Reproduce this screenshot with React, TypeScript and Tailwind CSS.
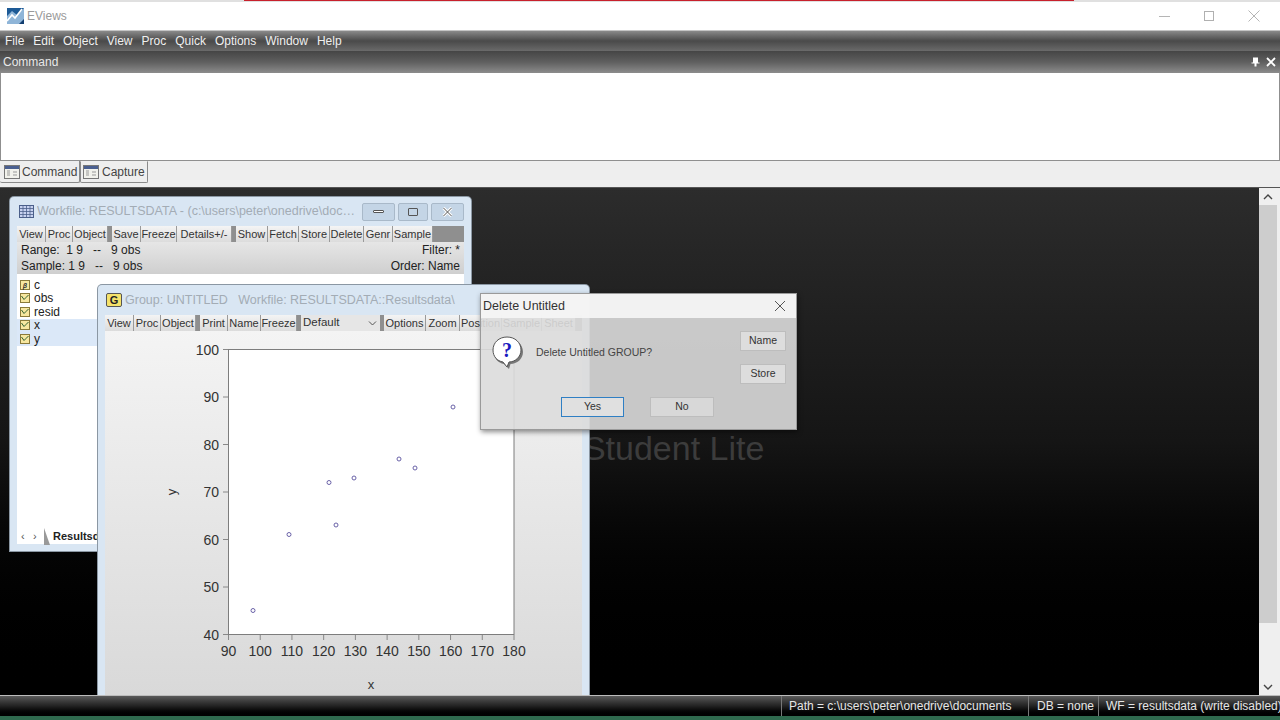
const SANS = "font-['Liberation_Sans',Arial,sans-serif]";

function BarButton({ label, w }: { label: string; w: number }) {
  return (
    <div
      className="flex h-full shrink-0 items-center justify-center border-r border-[#9a9a9a] bg-gradient-to-b from-[#f4f4f4] to-[#dcdcdc] text-[11px] text-[#333]"
      style={{ width: w }}
    >
      {label}
    </div>
  );
}

function BarGap() {
  return <div className="h-full w-[4px] shrink-0 bg-[#8f8f8f]" />;
}

function SeriesIcon({ beta }: { beta?: boolean }) {
  return (
    <svg width="10" height="10" viewBox="0 0 10 10" className="shrink-0">
      <rect x="0.5" y="0.5" width="9" height="9" fill="#f7e7a0" stroke="#8a7a3a" />
      {beta ? (
        <text x="5" y="8" fontSize="7" fontWeight="bold" fontStyle="italic" textAnchor="middle" fill="#333">
          β
        </text>
      ) : (
        <path d="M1.5 3 L4 6.5 L6 4.5 L8.5 2" fill="none" stroke="#2e5f2e" strokeWidth="1" />
      )}
    </svg>
  );
}

function TabIcon() {
  return (
    <svg width="16" height="14" viewBox="0 0 16 14" className="shrink-0">
      <rect x="0.5" y="0.5" width="15" height="13" fill="#f2f2ec" stroke="#777" />
      <rect x="1" y="1" width="14" height="3" fill="#4a5f90" />
      <path d="M3 6h3M3 8h3M3 10h3M9 7h4M9 10h4" stroke="#999" fill="none" />
    </svg>
  );
}

function Logo() {
  return (
    <svg width="17" height="16" viewBox="0 0 17 16" className="shrink-0">
      <rect width="17" height="16" fill="#1d5a96" />
      <path d="M0 16 L0 8 L5 3 L10 7 L17 0 L17 16 Z" fill="#8fb5d8" />
      <path d="M0 13 L5 7 L8 10 L15 1" fill="none" stroke="#fff" strokeWidth="1.6" />
      <path d="M12 16 L17 11 L17 16 Z" fill="#123e70" />
    </svg>
  );
}

function QuestionBubble() {
  return (
    <svg width="34" height="34" viewBox="0 0 34 34">
      <path d="M17.5 3 C26 3 32 8.5 32 16 C32 23 26 28 19.5 28 L18 33 L13 28 C7 27 3 22.5 3 16 C3 8.5 9 3 17.5 3 Z" fill="#777" />
      <path d="M16 1 C24 1 30 6.5 30 14 C30 21 24 26 18 26 L16 31 L12 26 C6 25 2 20.5 2 14 C2 6.5 8 1 16 1 Z" fill="#fff" stroke="#555" />
      <text x="16" y="21" fontSize="20" fontWeight="bold" textAnchor="middle" fill="#1a1ac0" fontFamily="Liberation Serif, serif">
        ?
      </text>
    </svg>
  );
}

function ScatterChart() {
  const xs = [90, 100, 110, 120, 130, 140, 150, 160, 170, 180];
  const ys = [100, 90, 80, 70, 60, 50, 40];
  const points = [
    [253, 610.5],
    [289, 534.5],
    [329, 482.5],
    [336, 525],
    [354, 478],
    [399, 459],
    [415, 468],
    [453, 407],
  ];
  const toX = (v: number) => 228.5 + ((v - 90) / 90) * 285.5;
  const toY = (v: number) => 349.5 + ((100 - v) / 60) * 285;
  return (
    <svg width="476" height="365" viewBox="105 331 476 365" className="block" fontFamily="Liberation Sans, Arial, sans-serif">
      <rect x="228.5" y="349.5" width="285.5" height="285" fill="#fff" stroke="#7d7d7d" />
      {xs.map(v => (
        <g key={v}>
          <line x1={toX(v)} x2={toX(v)} y1="635" y2="640" stroke="#888" />
          <text x={toX(v)} y="656" fontSize="14" textAnchor="middle" fill="#333">
            {v}
          </text>
        </g>
      ))}
      {ys.map(v => (
        <g key={v}>
          <line x1="223" x2="228" y1={toY(v)} y2={toY(v)} stroke="#888" />
          <text x="219" y={toY(v) + 5} fontSize="14" textAnchor="end" fill="#333">
            {v}
          </text>
        </g>
      ))}
      {points.map(([x, y]) => (
        <circle key={x} cx={x} cy={y} r="2" fill="none" stroke="#6a62a8" />
      ))}
      <text x="371" y="689" fontSize="13" textAnchor="middle" fill="#333">
        x
      </text>
      <text x="176" y="492" fontSize="13" textAnchor="middle" fill="#333" transform="rotate(-90 176 492)">
        y
      </text>
    </svg>
  );
}

function WorkfileWindow() {
  const rows = [
    { name: 'c', beta: true },
    { name: 'obs' },
    { name: 'resid' },
    { name: 'x', selected: true },
    { name: 'y', selected: true },
  ];
  return (
    <div className="absolute left-[10px] top-[9px] flex h-[354px] w-[461px] flex-col rounded-t-[4px] bg-[#d9e6f3] px-[7px] shadow-[0_0_0_1px_#8b97a3]">
      <div className="flex h-[29px] shrink-0 items-center gap-[3px] pl-[2px]">
        <svg width="15" height="13" viewBox="0 0 15 13" className="shrink-0">
          <rect x="0.5" y="0.5" width="14" height="12" fill="#c8d2f0" stroke="#4b5f8a" />
          <path d="M0 3.5h15M0 6.5h15M0 9.5h15M4 0v13M7.5 0v13M11 0v13" stroke="#4b5f8a" strokeWidth="0.8" />
        </svg>
        <span className="w-[326px] truncate text-[12.5px] text-[#a3acb5]">
          Workfile: RESULTSDATA - (c:\users\peter\onedrive\docume...
        </span>
        <div className="ml-[1px] flex gap-[3px]">
          <div className="flex h-[18px] w-[33px] items-center justify-center rounded-[2px] border border-[#a9b9c9] bg-[#c4d5e6]">
            <div className="h-[3px] w-[11px] rounded-[1px] border border-[#555] bg-white" />
          </div>
          <div className="flex h-[18px] w-[30px] items-center justify-center rounded-[2px] border border-[#a9b9c9] bg-[#c4d5e6]">
            <div className="h-[8px] w-[10px] rounded-[1px] border border-[#555]" />
          </div>
          <div className="flex h-[18px] w-[33px] items-center justify-center rounded-[2px] border border-[#a9b9c9] bg-[#c4d5e6]">
            <svg width="11" height="10" viewBox="0 0 11 10">
              <path d="M1.5 1 L9.5 9 M9.5 1 L1.5 9" stroke="#fff" strokeWidth="3" />
              <path d="M1.5 1 L9.5 9 M9.5 1 L1.5 9" stroke="#555" strokeWidth="1" />
            </svg>
          </div>
        </div>
      </div>
      <div className="flex h-[16px] shrink-0 bg-[#8f8f8f]">
        <BarButton label="View" w={29} />
        <BarButton label="Proc" w={27} />
        <BarButton label="Object" w={35} />
        <BarGap />
        <BarButton label="Save" w={29} />
        <BarButton label="Freeze" w={36} />
        <BarButton label="Details+/-" w={55} />
        <BarGap />
        <BarButton label="Show" w={32} />
        <BarButton label="Fetch" w={31} />
        <BarButton label="Store" w={31} />
        <BarButton label="Delete" w={34} />
        <BarButton label="Genr" w={29} />
        <BarButton label="Sample" w={40} />
      </div>
      <div className="flex h-[32px] shrink-0 flex-col justify-center bg-gradient-to-b from-[#e6e6e6] to-[#cfcfcf] px-[4px] text-[12px] leading-[16px] text-[#222]">
        <div className="flex justify-between">
          <span className="whitespace-pre">Range:  1 9   --   9 obs</span>
          <span>Filter: *</span>
        </div>
        <div className="flex justify-between">
          <span className="whitespace-pre">Sample: 1 9   --   9 obs</span>
          <span>Order: Name</span>
        </div>
      </div>
      <div className="flex flex-1 flex-col bg-white pt-[4px]">
        {rows.map(r => (
          <div
            key={r.name}
            className={`flex h-[13.5px] items-center gap-[4px] pl-[3px] text-[12px] text-[#222] ${r.selected ? 'bg-[#dbe8f8]' : ''}`}
          >
            <SeriesIcon beta={r.beta} />
            <span>{r.name}</span>
          </div>
        ))}
      </div>
      <div className="mb-[7px] flex h-[16px] shrink-0 items-center bg-white pl-[4px] text-[11px] text-[#555]">
        <span className="w-[12px]">‹</span>
        <span className="w-[11px]">›</span>
        <svg width="6" height="17" viewBox="0 0 6 17" className="shrink-0">
          <path d="M0 0 L6 17 L0 17 Z" fill="#999" />
        </svg>
        <span className="ml-[3px] text-[11px] font-bold text-[#222]">Resultsdata</span>
      </div>
    </div>
  );
}

function GroupWindow() {
  return (
    <div className="absolute left-[98px] top-[97px] flex h-[410px] w-[491px] flex-col rounded-t-[4px] bg-[#d9e6f3] px-[7px] shadow-[0_0_0_1px_#8b97a3]">
      <div className="flex h-[30px] shrink-0 items-center gap-[3px] pl-[1px]">
        <div className="flex h-[14px] w-[16px] items-center justify-center rounded-[2px] border border-[#555] bg-[#f5e26a] text-[11px] font-bold text-[#222]">
          G
        </div>
        <span className="text-[12.5px] whitespace-pre text-[#a3acb5]">Group: UNTITLED   Workfile: RESULTSDATA::Resultsdata\</span>
      </div>
      <div className="flex h-[16px] shrink-0 overflow-hidden bg-[#8f8f8f]">
        <BarButton label="View" w={29} />
        <BarButton label="Proc" w={27} />
        <BarButton label="Object" w={35} />
        <BarGap />
        <BarButton label="Print" w={28} />
        <BarButton label="Name" w={33} />
        <BarButton label="Freeze" w={36} />
        <BarGap />
        <div className="flex h-full w-[79px] shrink-0 items-center justify-between bg-[#e6e6e6] pl-[2px] pr-[3px] text-[11.5px] text-[#333]">
          <span>Default</span>
          <svg width="9" height="5" viewBox="0 0 9 5">
            <path d="M1 0.5 L4.5 4 L8 0.5" fill="none" stroke="#555" />
          </svg>
        </div>
        <BarGap />
        <BarButton label="Options" w={42} />
        <BarButton label="Zoom" w={34} />
        <BarButton label="Position" w={42} />
        <BarButton label="Sample" w={40} />
        <BarButton label="Sheet" w={34} />
      </div>
      <div className="min-h-0 flex-1 overflow-hidden bg-gradient-to-b from-[#f4f4f4] to-[#d9d9d9]">
        <ScatterChart />
      </div>
    </div>
  );
}

function DeleteDialog() {
  return (
    <div className="absolute left-[480px] top-[105px] flex h-[137px] w-[317px] flex-col border border-[#9a9a9a] bg-[#dcdcdc]/90 shadow-[1px_2px_5px_rgba(0,0,0,0.45)]">
      <div className="flex h-[24px] shrink-0 items-center justify-between bg-[#f6f6f6]/90 pl-[2px] pr-[10px]">
        <span className="text-[12.5px] text-[#333]">Delete Untitled</span>
        <svg width="12" height="12" viewBox="0 0 12 12">
          <path d="M1 1 L11 11 M11 1 L1 11" stroke="#555" fill="none" />
        </svg>
      </div>
      <div className="flex min-h-0 flex-1 flex-col px-[10px]">
        <div className="flex flex-1">
          <div className="flex flex-1 items-center gap-[11px] pb-[12px] pt-[2px]">
            <QuestionBubble />
            <span className="text-[10.5px] text-[#444]">Delete Untitled GROUP?</span>
          </div>
          <div className="flex flex-col gap-[13px] pt-[13px]">
            <div className="flex h-[20px] w-[46px] items-center justify-center border border-[#bdbdbd] bg-[#dddddd] text-[10.5px] text-[#333]">
              Name
            </div>
            <div className="flex h-[20px] w-[46px] items-center justify-center border border-[#bdbdbd] bg-[#dddddd] text-[10.5px] text-[#333]">
              Store
            </div>
          </div>
        </div>
        <div className="mb-[12px] flex gap-[26px] pl-[70px]">
          <div className="flex h-[20px] w-[63px] items-center justify-center border-[1.5px] border-[#2f7fc4] bg-[#e0e0e0] text-[10.5px] text-[#333]">
            Yes
          </div>
          <div className="flex h-[20px] w-[64px] items-center justify-center border border-[#bdbdbd] bg-[#d8d8d8] text-[10.5px] text-[#333]">
            No
          </div>
        </div>
      </div>
    </div>
  );
}

export default function App() {
  return (
    <div className={`flex h-[720px] w-[1280px] flex-col overflow-hidden bg-white ${SANS}`}>
      {/* top strip of the window behind */}
      <div className="relative h-[2px] shrink-0 bg-[#e0e0e0]">
        <div className="absolute left-[244px] top-0 h-[1px] w-[830px] bg-[#c8202c]" />
      </div>

      {/* title bar */}
      <div className="flex h-[28px] shrink-0 items-center pl-[7px] pr-[20px]">
        <Logo />
        <span className="ml-[3px] text-[12px] text-[#9a9a9a]">EViews</span>
        <div className="ml-auto flex items-center gap-[34px]">
          <div className="h-[1px] w-[11px] bg-[#b5b5b5]" />
          <div className="h-[10px] w-[10px] border border-[#b0b0b0]" />
          <svg width="12" height="12" viewBox="0 0 12 12">
            <path d="M0.5 0.5 L11.5 11.5 M11.5 0.5 L0.5 11.5" stroke="#b5b5b5" fill="none" />
          </svg>
        </div>
      </div>

      {/* menu bar */}
      <div className="flex h-[21px] shrink-0 items-center gap-[9px] border-t border-[#c5c5c5] bg-gradient-to-b from-[#8a8a8a] via-[#4a4a4a] to-[#6a6a6a] pl-[5px] text-[12px] text-[#f0f0f0]">
        {['File', 'Edit', 'Object', 'View', 'Proc', 'Quick', 'Options', 'Window', 'Help'].map(m => (
          <span key={m}>{m}</span>
        ))}
      </div>

      {/* command pane */}
      <div className="flex h-[22px] shrink-0 items-center justify-between bg-gradient-to-b from-[#454545] via-[#5f5f5f] to-[#8c8c8c] pl-[3px] pr-[4px] text-[12px] text-[#e8e8e8]">
        <span>Command</span>
        <div className="flex items-center gap-[6px]">
          <svg width="9" height="10" viewBox="0 0 9 10">
            <path d="M2 0.5h5v5h1.5v1h-3v3h-2v-3h-3v-1h1.5z" fill="#fff" />
          </svg>
          <svg width="10" height="10" viewBox="0 0 10 10">
            <path d="M1 1 L9 9 M9 1 L1 9" stroke="#fff" strokeWidth="1.8" />
          </svg>
        </div>
      </div>
      <div className="h-[88px] shrink-0 border-x border-b border-[#8f8f8f] bg-white" />

      {/* tabs */}
      <div className="flex h-[27px] shrink-0 items-start border-b border-[#555] bg-[#eeeeee]">
        <div className="flex h-[22px] w-[80px] items-center gap-[2px] rounded-b-[2px] border-b border-r border-[#8a8a8a] pl-[4px] text-[12px] text-[#444]">
          <TabIcon />
          <span>Command</span>
        </div>
        <div className="flex h-[22px] w-[68px] items-center gap-[3px] rounded-b-[2px] border-x border-b border-t border-[#8a8a8a] border-t-transparent pl-[2px] text-[12px] text-[#444]">
          <TabIcon />
          <span>Capture</span>
        </div>
      </div>

      {/* workspace */}
      <div className="relative flex min-h-0 flex-1">
        <div className="relative min-w-0 flex-1 overflow-hidden bg-gradient-to-b from-[#2c2c2c] via-[#151515] to-black">
          <div className="absolute left-[404px] top-[235px] text-[34px] whitespace-nowrap text-[#3c3c3c]">EViews 9.5 Student Lite</div>
          <WorkfileWindow />
          <GroupWindow />
          <DeleteDialog />
        </div>
        <div className="flex w-[21px] shrink-0 flex-col items-stretch bg-[#efefef] pr-[3px]">
          <div className="flex h-[17px] shrink-0 items-center justify-center">
            <svg width="10" height="6" viewBox="0 0 10 6">
              <path d="M1 5 L5 1 L9 5" fill="none" stroke="#444" strokeWidth="1.4" />
            </svg>
          </div>
          <div className="h-[418px] shrink-0 bg-[#cdcdcd]" />
          <div className="flex-1" />
          <div className="flex h-[17px] shrink-0 items-center justify-center">
            <svg width="10" height="6" viewBox="0 0 10 6">
              <path d="M1 1 L5 5 L9 1" fill="none" stroke="#444" strokeWidth="1.4" />
            </svg>
          </div>
        </div>
      </div>

      {/* status bar */}
      <div className="flex h-[21px] shrink-0 items-center justify-end border-t border-[#bcbcbc] bg-gradient-to-b from-[#5a5a5a] via-[#222222] to-black text-[12px] text-[#e6e6e6]">
        <div className="flex h-full w-[247px] items-center border-l border-[#777] pl-[7px]">Path = c:\users\peter\onedrive\documents</div>
        <div className="flex h-full w-[70px] items-center border-l border-[#777] pl-[8px]">DB = none</div>
        <div className="flex h-full w-[182px] items-center border-l border-[#777] pl-[7px] whitespace-nowrap">WF = resultsdata (write disabled)</div>
      </div>
      <div className="h-[4px] shrink-0 bg-[#2f6a4e]" />
    </div>
  );
}
